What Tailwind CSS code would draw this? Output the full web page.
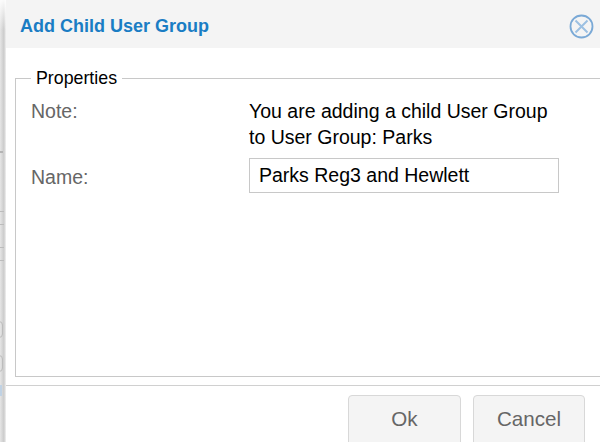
<!DOCTYPE html>
<html>
<head>
<meta charset="utf-8">
<script src="https://cdn.jsdelivr.net/npm/@tailwindcss/browser@4"></script>
</head>
<body class="m-0 bg-white">
<div class="relative flex h-[442px] w-[600px] overflow-hidden bg-white font-['Liberation_Sans',Arial,sans-serif]">
  <div class="relative h-full w-[6px] shrink-0 bg-gradient-to-r from-[#e6e6e6] via-[#cbcbcb] via-65% to-[#f2f2f2]">
    <div class="absolute inset-x-0 top-0 h-[30px] bg-gradient-to-b from-white/90 to-transparent"></div>
    <div class="absolute left-0 top-[151px] h-[2px] w-[3px] bg-[#b4b4b4]"></div>
    <div class="absolute left-0 top-[211px] h-[1px] w-[4px] bg-[#bcbcbc]"></div>
    <div class="absolute left-0 top-[224px] h-[1px] w-[4px] bg-[#bcbcbc]"></div>
    <div class="absolute left-0 top-[247px] h-[1px] w-[4px] bg-[#bcbcbc]"></div>
    <div class="absolute left-0 top-[260px] h-[1px] w-[4px] bg-[#bcbcbc]"></div>
    <div class="absolute -left-[9px] top-[321px] h-[17px] w-[12px] rounded-[4px] border border-[#bcbcbc]"></div>
    <div class="absolute -left-[9px] top-[355px] h-[17px] w-[12px] rounded-[4px] border border-[#bcbcbc]"></div>
    <div class="absolute left-0 top-[385px] h-[11px] w-[2px] bg-[#c0d2e4]"></div>
  </div>
  <div class="flex min-w-0 flex-1 flex-col">
    <header class="flex h-[48px] shrink-0 items-center justify-between bg-[#f4f4f4] pl-[14px] pr-[6px]">
      <h1 class="mt-[3px] text-[18px] leading-[24px] font-bold text-[#1a7dc4]">Add Child User Group</h1>
      <svg width="25" height="25" viewBox="0 0 25 25" fill="none" class="mt-[4px]">
        <circle cx="12.5" cy="12.5" r="11" stroke="#7aa9d6" stroke-width="1.8"/>
        <path d="M6.5 6.5 L18.5 18.5 M18.5 6.5 L6.5 18.5" stroke="#9cc0e2" stroke-width="2"/>
      </svg>
    </header>
    <div class="flex-1 pl-[9px] pt-[20px]">
      <fieldset class="-mr-[10px] h-[309px] border border-[#c8c8c8] border-r-0 pl-[15px]">
        <legend class="px-[5px] text-[17.8px] leading-[20px] text-black">Properties</legend>
        <div class="grid grid-cols-[218px_310px] gap-y-[8px] pt-[10px] text-[19.5px] leading-[26px]">
          <div class="text-[#666]">Note:</div>
          <div class="text-black">You are adding a child User Group<br>to User Group: Parks</div>
          <label class="mt-[3px] self-center text-[#666]">Name:</label>
          <input type="text" value="Parks Reg3 and Hewlett" class="h-[35px] w-[310px] border border-[#c8c8c8] bg-white px-[9px] text-[19.5px] text-black outline-none">
        </div>
      </fieldset>
    </div>
    <footer class="flex h-[57px] shrink-0 justify-end gap-[12px] border-t border-[#d0d0d0] pt-[9px] pr-[15px]">
      <button class="h-[60px] w-[113px] rounded-[4px] border border-[#d8d8d8] bg-[#f4f4f4] pb-[12px] text-[20.6px] text-[#666]">Ok</button>
      <button class="h-[60px] w-[112px] rounded-[4px] border border-[#d8d8d8] bg-[#f4f4f4] pb-[12px] text-[20.6px] text-[#666]">Cancel</button>
    </footer>
  </div>
</div>
</body>
</html>
